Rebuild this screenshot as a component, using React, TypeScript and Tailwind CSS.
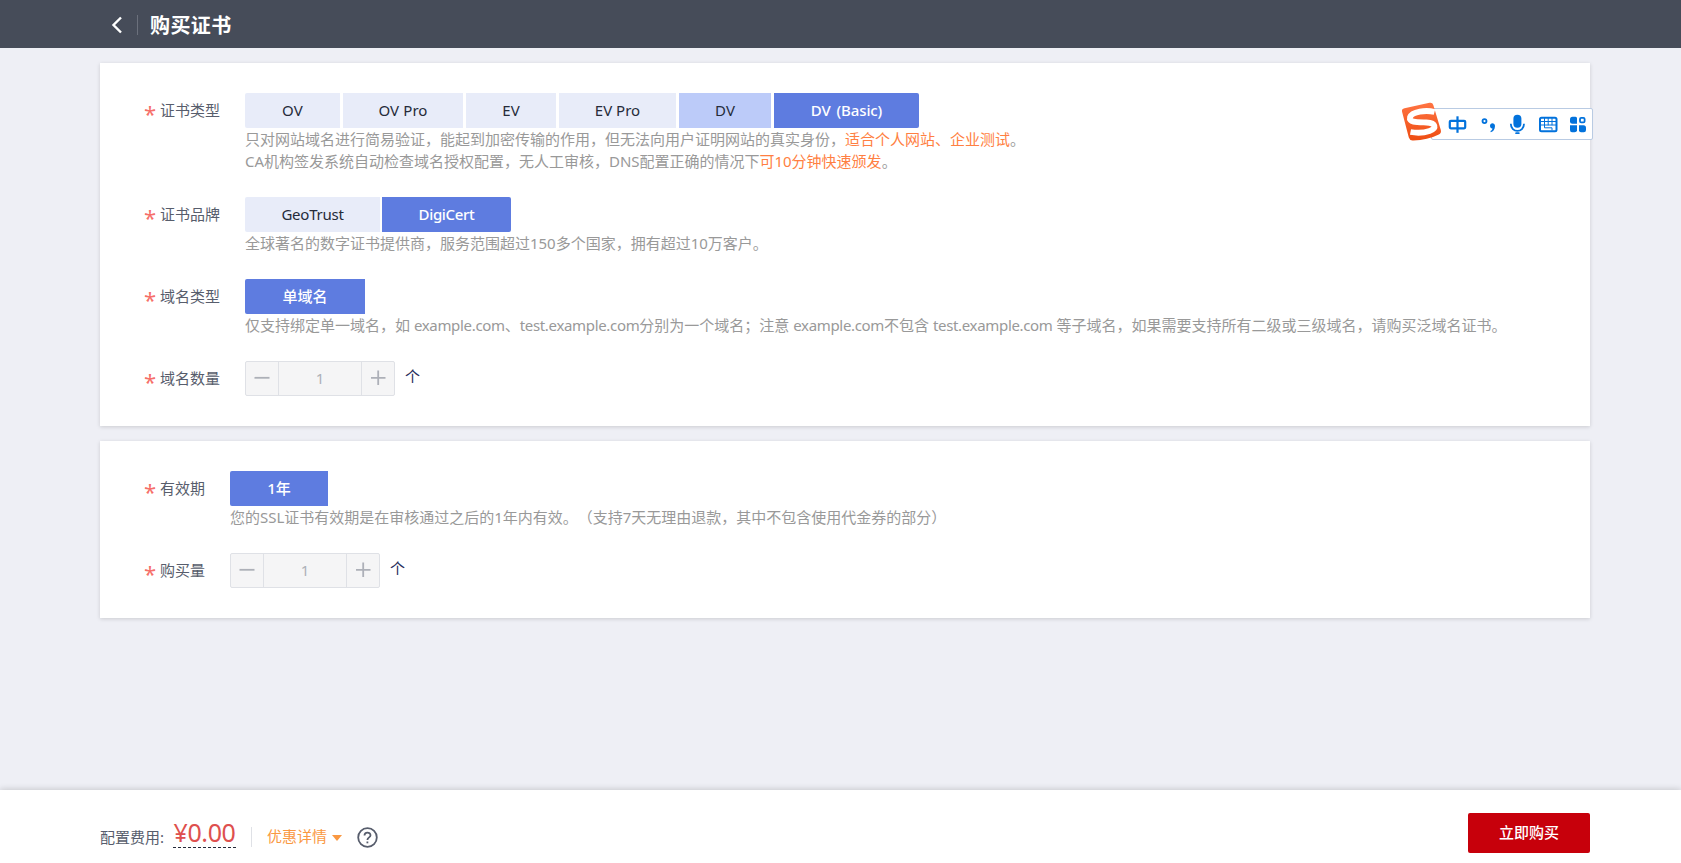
import type { ReactNode } from "react";

function Text({ children }: { children: string }) {
  const parts = children.split(/([A-Za-z0-9.()]+(?: [A-Za-z0-9.()]+)*)/);
  return (
    <>
      {parts.map((part, i) =>
        i % 2 === 1 ? (
          <span key={i} className={part.includes(".com") ? "tracking-[-0.33px]" : "tracking-[-0.04px]"}>
            {part}
          </span>
        ) : (
          part
        )
      )}
    </>
  );
}

function Row({ label, wide, children }: { label: string; wide?: boolean; children: ReactNode }) {
  return (
    <div className="flex">
      <div className={`-ml-px flex h-[35px] shrink-0 items-center pb-px ${wide ? "w-[101px]" : "w-[86px]"}`}>
        <span className="w-[16px] shrink-0 pt-[5px] text-[22px] leading-none text-[#f66f6a]">*</span>
        <span className="text-[#575d6c]">{label}</span>
      </div>
      <div className="min-w-0">{children}</div>
    </div>
  );
}

type Tone = "idle" | "hover" | "active";
type Option = { label: string; width: string; tone: Tone; round?: string };

const tones: Record<Tone, string> = {
  idle: "bg-[#e8ecf9] text-[#252b3a]",
  hover: "bg-[#bccbf9] text-[#252b3a]",
  active: "bg-[#5e7ce0] font-medium text-white",
};

function Options({ items, gap = "gap-[3px]" }: { items: Option[]; gap?: string }) {
  return (
    <div className={`flex ${gap}`}>
      {items.map((o) => (
        <button
          key={o.label}
          className={`flex h-[35px] items-center justify-center whitespace-nowrap pb-px ${o.width} ${tones[o.tone]} ${o.round ?? ""}`}
        >
          {o.label}
        </button>
      ))}
    </div>
  );
}

function Desc({ children }: { children: ReactNode }) {
  return <p className="h-[22px] whitespace-nowrap leading-[22px] text-[#999999]">{children}</p>;
}

function Stepper() {
  return (
    <div className="flex">
      <div className="flex h-[35px] w-[150px] rounded-[2px] border border-[#dfe1e6] bg-[#f5f5f6] text-[#adb0b8]">
        <button className="flex w-[33px] items-center justify-center border-r border-[#dfe1e6]">
          <svg className="-mt-px" width="16" height="16" viewBox="0 0 16 16" stroke="currentColor" strokeWidth="1.8">
            <path d="M0.5 7.8H15.5" />
          </svg>
        </button>
        <span className="flex flex-1 items-center justify-center">1</span>
        <button className="flex w-[33px] items-center justify-center border-l border-[#dfe1e6]">
          <svg className="-mt-px" width="16" height="16" viewBox="0 0 16 16" stroke="currentColor" strokeWidth="1.8">
            <path d="M1 7.8H15.5M8.2 0.5V15" />
          </svg>
        </button>
      </div>
      <span className="ml-[10px] mt-[4px] leading-[22px] text-[#252b5a]">个</span>
    </div>
  );
}

function InputBar() {
  return (
    <div className="absolute left-[1401px] top-[101px] flex h-[41px] w-[192px] items-center">
      <div className="absolute left-[30px] top-[7px] h-[32px] w-[162px] rounded-[2px] border border-[#b9cbe3] bg-white" />
      <svg className="relative" width="192" height="41" viewBox="0 0 192 41" fill="none">
        <defs>
          <linearGradient id="logo" x1="0" y1="0" x2="0" y2="1">
            <stop offset="0" stopColor="#ff7443" />
            <stop offset="1" stopColor="#ee4d12" />
          </linearGradient>
        </defs>
        <path
          d="M3.5 7.2L28.5 1.8Q31.5 1.2 32.3 4L39.8 29Q40.6 32 37.8 33.6Q26 39.6 11.5 39.4Q8.6 39.3 7.8 36.5L1 10.5Q0.6 7.8 3.5 7.2Z"
          fill="url(#logo)"
        />
        <path
          d="M33.5 11C25 8.800 11 10.500 9 16.300C7.500 21.800 17 21.300 25.500 21.500C35 21.700 36 27.500 28.500 30C22.500 32 15 32 9.500 31"
          stroke="#fff"
          strokeWidth="5.800"
        />
        <g transform="translate(0 7.3)">
          <g stroke="#0272dc" strokeWidth="2.2">
            <rect x="48.8" y="12.5" width="15.4" height="7.5" rx="1" />
            <path d="M56.5 8V24.5" />
            <circle cx="83.5" cy="12.800" r="2" strokeWidth="1.8" />
            <path d="M109.8 15.5C109.8 25 123 25 123 15.5" strokeWidth="1.8" />
            <rect x="139" y="9.500" width="16.5" height="13.5" rx="1.5" strokeWidth="2" />
            <path d="M143.5 9.500V19.500M147.2 9.500V17M151 9.500V17M140 13.200H155M140 16.700H155M143.500 19.500H151V22" strokeWidth="1" />
            <rect x="179" y="9.5" width="4.6" height="4.6" rx="1.2" strokeWidth="1.8" />
          </g>
          <g fill="#0272dc">
            <path d="M89 17.5C89 14 94 14 94 17.8C94 21.2 92.2 23.5 89.7 24L89.5 22.8C91 22.2 91.4 21 91.4 20.2C90 20.3 89 19.2 89 17.5Z" />
            <rect x="112.4" y="6.5" width="8" height="13" rx="4" />
            <rect x="114.2" y="24" width="4.5" height="1.8" rx="0.9" />
            <path d="M171.5 8.5H174.5Q176 8.5 176 10V15.5H171.500Q169 15.5 169 13V11Q169 8.5 171.5 8.5Z" />
            <path d="M169 17H176V22Q176 24 173.5 24H171Q169 24 169 21.8Z" />
            <path d="M178 17H182.5Q185 17 185 19.5V21.8Q185 24 182.8 24H180Q178 24 178 22Z" />
          </g>
        </g>
      </svg>
    </div>
  );
}

const types: Option[] = [
  { label: "OV", width: "w-[95px]", tone: "idle", round: "rounded-l-[2px] tracking-[0.3px]" },
  { label: "OV Pro", width: "w-[120px]", tone: "idle", round: "tracking-[0.1px]" },
  { label: "EV", width: "w-[90px]", tone: "idle" },
  { label: "EV Pro", width: "w-[117px]", tone: "idle" },
  { label: "DV", width: "w-[92px]", tone: "hover" },
  { label: "DV (Basic)", width: "w-[145px]", tone: "active", round: "rounded-r-[2px] tracking-[-0.1px] [word-spacing:2px]" },
];

const brands: Option[] = [
  { label: "GeoTrust", width: "w-[135px]", tone: "idle", round: "rounded-l-[2px] tracking-[-0.25px]" },
  { label: "DigiCert", width: "w-[129px]", tone: "active", round: "rounded-r-[2px] tracking-[-0.35px]" },
];

export default function App() {
  return (
    <div className="relative flex h-[863px] w-[1681px] flex-col overflow-hidden bg-[#eeeff5] font-['Noto_Sans','Noto_Sans_CJK_SC',sans-serif] text-[15px] [text-spacing-trim:space-all]">
      <header className="flex h-[48px] shrink-0 items-center bg-[#464c59] pl-[111px] text-white">
        <svg className="mt-px" width="12" height="18" viewBox="0 0 12 18" fill="none" stroke="#fff" strokeWidth="2.4">
          <path d="M10 1.500L2.500 9L10 16.500" />
        </svg>
        <span className="ml-[14px] mt-[2px] h-[20px] w-px bg-[#6b707c]" />
        <h1 className="ml-[12px] pt-[3px] text-[20px] font-bold tracking-[0.4px]">购买证书</h1>
      </header>

      <main className="flex flex-1 flex-col gap-[15px] pl-[100px] pt-[15px]">
        <section className="flex h-[363px] w-[1490px] flex-col bg-white pl-[45px] pt-[30px] shadow-[0_1px_4px_rgba(0,0,0,0.15)]">
          <div className="h-[104px]">
            <Row label="证书类型" wide>
              <Options items={types} />
              <Desc>
                只对网站域名进行简易验证，能起到加密传输的作用，但无法向用户证明网站的真实身份，
                <span className="text-[#ff7f42]">适合个人网站、企业测试</span>。
              </Desc>
              <Desc>
                <Text>CA机构签发系统自动检查域名授权配置，无人工审核，DNS配置正确的情况下</Text>
                <span className="text-[#ff7f42]">
                  <Text>可10分钟快速颁发</Text>
                </span>
                。
              </Desc>
            </Row>
          </div>
          <div className="h-[82px]">
            <Row label="证书品牌" wide>
              <Options items={brands} gap="gap-[2px]" />
              <Desc>
                <Text>全球著名的数字证书提供商，服务范围超过150多个国家，拥有超过10万客户。</Text>
              </Desc>
            </Row>
          </div>
          <div className="h-[82px]">
            <Row label="域名类型" wide>
              <Options items={[{ label: "单域名", width: "w-[120px]", tone: "active", round: "rounded-l-[2px]" }]} />
              <Desc>
                <Text>
                  仅支持绑定单一域名，如 example.com、test.example.com分别为一个域名；注意 example.com不包含 test.example.com 等子域名，如果需要支持所有二级或三级域名，请购买泛域名证书。
                </Text>
              </Desc>
            </Row>
          </div>
          <Row label="域名数量" wide>
            <Stepper />
          </Row>
        </section>

        <section className="flex h-[177px] w-[1490px] flex-col bg-white pl-[45px] pt-[30px] shadow-[0_1px_4px_rgba(0,0,0,0.15)]">
          <div className="h-[82px]">
            <Row label="有效期">
              <Options items={[{ label: "1年", width: "w-[98px]", tone: "active", round: "rounded-l-[2px]" }]} />
              <Desc>
                <Text>您的SSL证书有效期是在审核通过之后的1年内有效。（支持7天无理由退款，其中不包含使用代金券的部分）</Text>
              </Desc>
            </Row>
          </div>
          <Row label="购买量">
            <Stepper />
          </Row>
        </section>
      </main>

      <footer className="flex h-[73px] shrink-0 justify-between bg-white pl-[100px] pr-[91px] pt-[23px] shadow-[0_-1px_6px_rgba(0,0,0,0.16)]">
        <div className="flex h-[48px] items-center">
          <span className="w-[65px] whitespace-nowrap text-[#575d6c]">配置费用:</span>
          <span className="-mt-[8px] ml-[8px] flex h-[30px] w-[63px] items-center justify-center border-b border-dashed border-[#252b3a] pt-px text-[25px] tracking-[-0.4px] text-[#de504e]">
            ¥0.00
          </span>
          <span className="ml-[15px] h-[20px] w-px bg-[#dfe1e6]" />
          <span className="ml-[15px] pb-[2px] text-[#fa9841]">优惠详情</span>
          <svg className="ml-[5px] mt-px" width="10" height="6" viewBox="0 0 10 6">
            <path d="M0 0H10L5 6Z" fill="#fa9841" />
          </svg>
          <svg className="ml-[15px]" width="21" height="21" viewBox="0 0 21 21" fill="none" stroke="#575d6c" strokeWidth="1.8">
            <circle cx="10.500" cy="10.500" r="9.300" />
            <path d="M7.500 8.500C7.500 4.600 13.500 4.600 13.500 8.300C13.500 10.500 10.400 10.300 10.400 13" />
            <path d="M10.400 14.500V16.300" />
          </svg>
        </div>
        <button className="h-[40px] w-[122px] rounded-[2px] bg-[#c7000b] pb-px font-medium text-white">立即购买</button>
      </footer>

      <InputBar />
    </div>
  );
}
